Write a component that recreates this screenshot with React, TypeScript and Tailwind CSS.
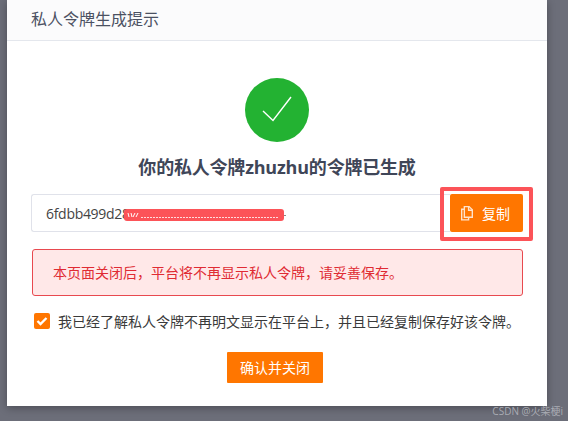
import React from "react";

export default function App() {
  return (
    <div className="relative h-[421px] w-[568px] overflow-hidden bg-[#6c6e79] font-['Open_Sans','Noto_Sans_CJK_SC',sans-serif]">
      <div className="ml-[7px] flex h-[406px] w-[540px] flex-col bg-white shadow-[0_2px_8px_rgba(0,0,0,0.3)]">
        <div className="flex h-[41px] shrink-0 items-center border-b border-[#e4e7ed] bg-[#fbfbfc] pb-[2px] pl-[24px] text-[16px] text-[#4b5162]">
          私人令牌生成提示
        </div>
        <div className="flex flex-1 flex-col pl-[24px] pr-[24px]">
          <div className="mt-[37px] flex h-[64px] w-[64px] items-center justify-center self-center rounded-full bg-[#23b232]">
            <svg width="64" height="64" viewBox="0 0 64 64" fill="none">
              <path d="M18 33 L28 42.5 L46 19" stroke="#fff" strokeWidth="1.4" />
            </svg>
          </div>
          <div className="mt-[11px] text-center text-[18px] leading-[28px] font-bold tracking-[-0.2px] text-[#3f4658]">
            你的私人令牌zhuzhu的令牌已生成
          </div>
          <div className="mt-[13px] flex h-[38px]">
            <div className="flex flex-1 items-center rounded-l-[3px] border border-r-0 border-[#e0e2ea] pl-[14px] text-[14px] tracking-[-0.3px] text-[#444]">
              6fdbb499d28
            </div>
            <button className="flex w-[73px] items-center gap-[7px] rounded-[2px] bg-[#ff7600] pl-[9px] text-[14px] text-white">
              <svg width="16" height="17" viewBox="0 0 15 16" fill="none" stroke="#ffe3cc" strokeWidth="1.3">
                <path d="M5 1.5h4.5l3 3V11.5H5z" />
                <path d="M9 1.5v3.5h3.5" />
                <path d="M5 4H2.5v10h6.5v-2.5" />
              </svg>
              复制
            </button>
          </div>
          <div className="mt-[17px] ml-px flex h-[47px] w-[491px] items-center rounded-[3px] border border-[#e8494f] bg-[#ffe8e8] pl-[20px] text-[14px] text-[#e02b33]">
            本页面关闭后，平台将不再显示私人令牌，请妥善保存。
          </div>
          <div className="mt-[16px] flex h-[18px] items-center pl-[3px]">
            <span className="flex h-[16px] w-[16px] items-center justify-center rounded-[2px] bg-[#ff7600]">
              <svg width="12" height="12" viewBox="0 0 12 12" fill="none" stroke="#fff" strokeWidth="2.4">
                <path d="M1.5 6l3 3L10.5 3" />
              </svg>
            </span>
            <span className="ml-[8px] text-[14px] whitespace-nowrap text-[#3a3a3a]">
              我已经了解私人令牌不再明文显示在平台上，并且已经复制保存好该令牌。
            </span>
          </div>
          <button className="mt-[22px] ml-[196px] flex h-[31px] w-[96px] items-center justify-center self-start rounded-[1px] bg-[#ff7600] text-[14px] text-white">
            确认并关闭
          </button>
        </div>
      </div>
      <div className="absolute top-[187px] left-[440px] h-[54px] w-[93px] rounded-[2px] border-[4px] border-[#fc5358]" />
      <svg className="absolute top-[208px] left-[124px]" width="164" height="14" viewBox="0 0 164 14" fill="none">
        <rect x="0" y="1" width="160" height="12" rx="3" fill="#fc5358" />
        <path d="M4 5l1 4M7 5l1 4M11 5l-2 4M14 5l-2 4" stroke="#fff" strokeWidth="1" />
        <path d="M17 9.5H155" stroke="#fff" strokeWidth="0.8" strokeDasharray="2 1" />
        <path d="M160 7.5h2" stroke="#888" strokeWidth="1" />
      </svg>
      <div className="absolute right-[5px] bottom-[0px] text-[10px] leading-[20px] text-[#a9abb3]">CSDN @火柴梗i</div>
    </div>
  );
}
